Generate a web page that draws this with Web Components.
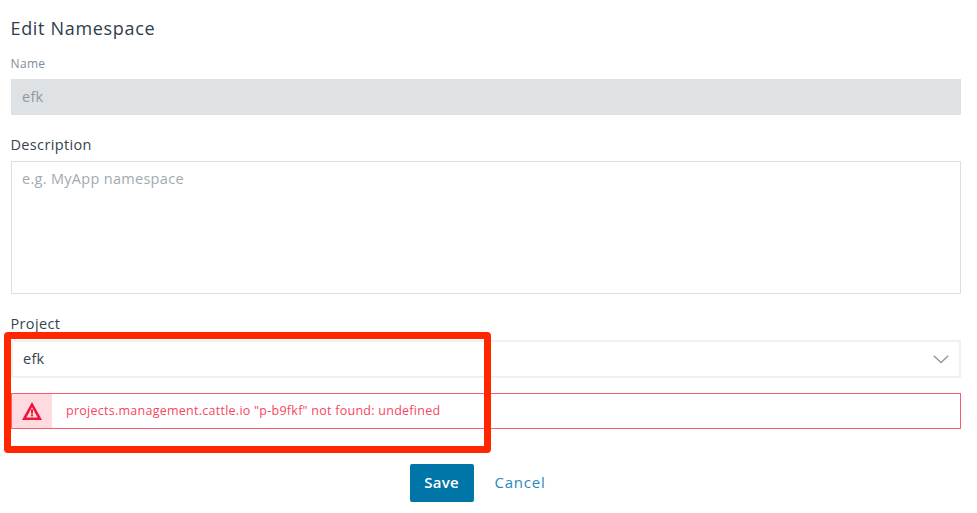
<!DOCTYPE html>
<html>
<head>
<meta charset="utf-8">
<style>
  html, body { margin: 0; background: #fff; }
  body { width: 977px; height: 513px; overflow: hidden; position: relative; font-family: "Open Sans", "Liberation Sans", sans-serif; }
</style>
</head>
<body>
<edit-page></edit-page>
<script>
const FONT = '"Open Sans", "Liberation Sans", sans-serif';

class FormField extends HTMLElement {
  constructor() {
    super();
    this.attachShadow({ mode: 'open' }).innerHTML = `
      <style>
        :host { display: block; }
        label { display: block; font-size: 14.5px; line-height: 20px; color: #36444f; letter-spacing: .35px; margin-bottom: 6px; margin-left: -.5px; }
        :host([small]) label { font-size: 12px; line-height: 16px; color: #7f8e9a; padding-top: 1px; margin-bottom: 7px; }
      </style>
      <label>${this.getAttribute('label') || ''}</label>
      <slot></slot>`;
  }
}
customElements.define('form-field', FormField);

class TextBox extends HTMLElement {
  constructor() {
    super();
    const value = this.getAttribute('value') || '';
    const ph = this.getAttribute('placeholder') || '';
    this.attachShadow({ mode: 'open' }).innerHTML = `
      <style>
        :host { display: block; box-sizing: border-box; height: 36px; background: #dfe2e5; color: #8f979e; font-size: 14.5px; line-height: 36px; padding: 0 11px; letter-spacing: .3px; }
        :host([multiline]) { height: 133px; background: #fff; border: 1px solid #dcdfe2; line-height: 20px; padding: 7px 10px; color: #a2aab0; }
      </style>
      ${value || ph}`;
  }
}
customElements.define('text-box', TextBox);

class SelectBox extends HTMLElement {
  constructor() {
    super();
    this.attachShadow({ mode: 'open' }).innerHTML = `
      <style>
        :host { display: flex; box-sizing: border-box; height: 38px; align-items: center; justify-content: space-between; border: 2px solid #edf1f2; background: #fff; padding: 0 10px 2px; color: #36444f; font-size: 14.5px; letter-spacing: .3px; }
        svg { display: block; margin-top: 2px; }
      </style>
      <slot></slot>
      <svg width="16" height="9" viewBox="0 0 16 9"><path d="M.7.7 8 7.6 15.3.7" fill="none" stroke="#8d9ba6" stroke-width="1.4"/></svg>`;
  }
}
customElements.define('select-box', SelectBox);

class ErrorBanner extends HTMLElement {
  constructor() {
    super();
    this.attachShadow({ mode: 'open' }).innerHTML = `
      <style>
        :host { display: flex; box-sizing: border-box; height: 36px; border: 1px solid #f75d6e; color: #fa4560; font-size: 12.5px; letter-spacing: .26px; align-items: center; }
        .icon { width: 40px; height: 100%; background: #ffdadf; display: flex; align-items: center; justify-content: center; flex: none; }
        .msg { padding: 0 0 2px 14px; white-space: nowrap; }
      </style>
      <div class="icon">
        <svg width="20" height="18" viewBox="0 0 20 18">
          <path fill="#f0133a" fill-rule="evenodd" d="M10 0 20 18H0ZM10 5.2 4.4 15.4H15.6Z"/>
          <rect x="9" y="7.4" width="2" height="4.2" fill="#f0133a"/>
          <rect x="9" y="12.4" width="2" height="2" fill="#f0133a"/>
        </svg>
      </div>
      <div class="msg"><slot></slot></div>`;
  }
}
customElements.define('error-banner', ErrorBanner);

class ActionBar extends HTMLElement {
  constructor() {
    super();
    this.attachShadow({ mode: 'open' }).innerHTML = `
      <style>
        :host { display: flex; justify-content: center; align-items: center; gap: 21px; padding-right: 17px; }
        button { font: 600 15px ${FONT}; letter-spacing: .3px; width: 64px; height: 38px; border: 0; border-radius: 2px; background: #0075a8; color: #fff; padding: 0 0 2px; }
        a { font-size: 15px; color: #2b87c2; letter-spacing: .75px; text-decoration: none; padding-bottom: 2px; }
      </style>
      <button>Save</button><a>Cancel</a>`;
  }
}
customElements.define('action-bar', ActionBar);

class HighlightBox extends HTMLElement {
  constructor() {
    super();
    this.attachShadow({ mode: 'open' }).innerHTML = `
      <style>
        :host { position: absolute; left: 4px; top: 332px; width: 487px; height: 121px; box-sizing: border-box; border: 7px solid #ff2600; border-radius: 4px; }
      </style>`;
  }
}
customElements.define('highlight-box', HighlightBox);

class EditPage extends HTMLElement {
  constructor() {
    super();
    this.attachShadow({ mode: 'open' }).innerHTML = `
      <style>
        :host { display: block; box-sizing: border-box; width: 977px; padding: 15px 16px 0 11px; color: #36444f; font-family: ${FONT}; }
        h1 { margin: 0 0 14px -.5px; font-size: 18px; line-height: 26px; font-weight: 400; letter-spacing: .68px; color: #2f3d4a; }
        .gap1 { height: 20px; }
        .gap2 { height: 20px; }
        .gap3 { height: 15px; }
        .gap4 { height: 35px; }
      </style>
      <h1>Edit Namespace</h1>
      <form-field label="Name" small><text-box disabled value="efk"></text-box></form-field>
      <div class="gap1"></div>
      <form-field label="Description"><text-box multiline placeholder="e.g. MyApp namespace"></text-box></form-field>
      <div class="gap2"></div>
      <form-field label="Project"><select-box>efk</select-box></form-field>
      <div class="gap3"></div>
      <error-banner>projects.management.cattle.io "p-b9fkf" not found: undefined</error-banner>
      <div class="gap4"></div>
      <action-bar></action-bar>
      <highlight-box></highlight-box>`;
  }
}
customElements.define('edit-page', EditPage);
</script>
</body>
</html>
